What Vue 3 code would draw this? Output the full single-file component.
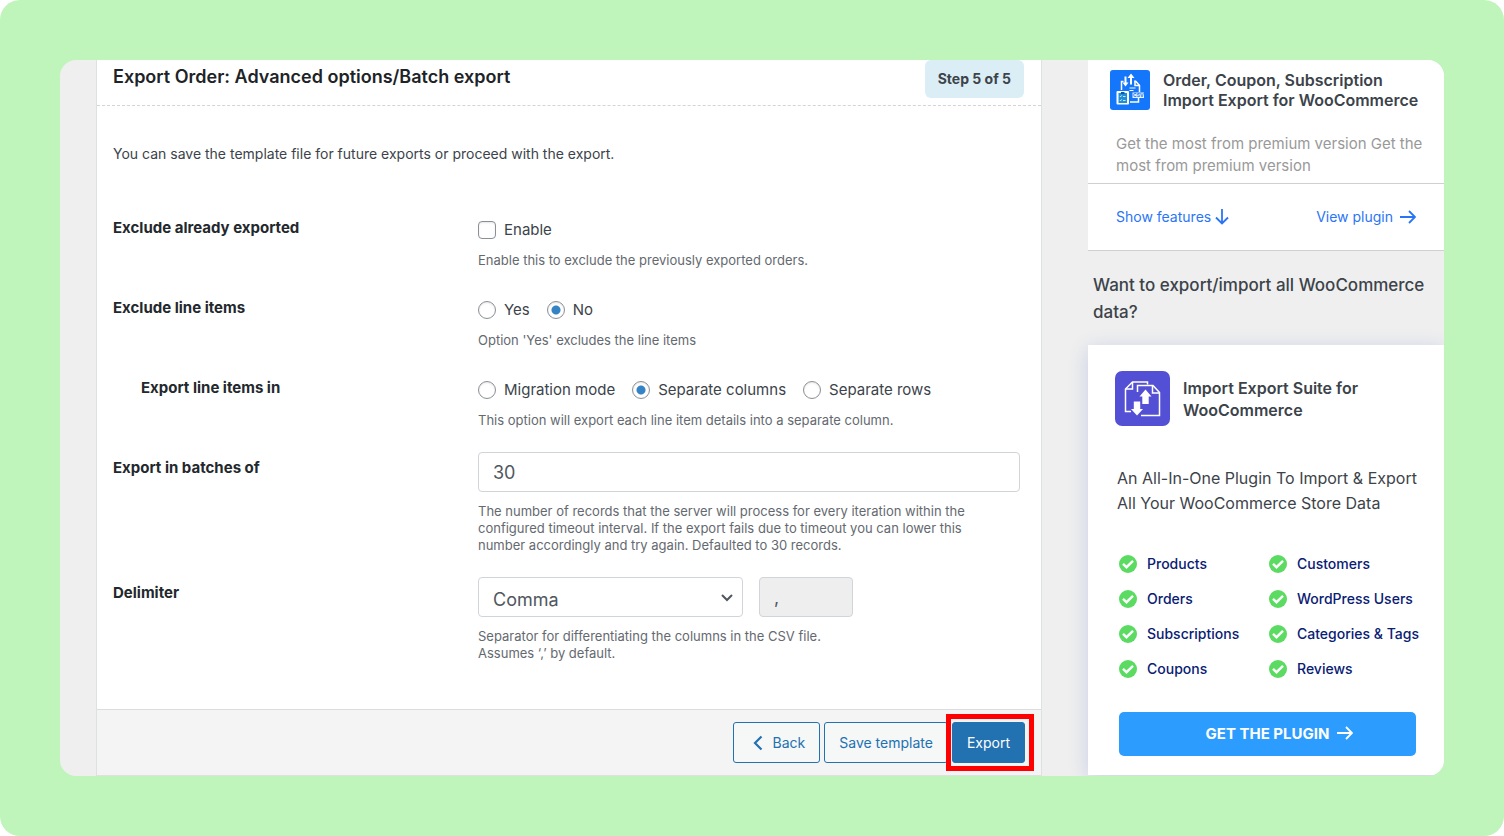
<script setup>
import { computed, ref } from 'vue'

const excludeExported = ref(false)
const excludeLineItems = ref('no')
const lineItemMode = ref('columns')
const batchSize = ref('30')
const delimiter = ref('comma')

const yesNo = [
  { value: 'yes', label: 'Yes' },
  { value: 'no', label: 'No' }
]

const lineItemModes = [
  { value: 'migration', label: 'Migration mode' },
  { value: 'columns', label: 'Separate columns' },
  { value: 'rows', label: 'Separate rows' }
]

const delimiters = [
  { value: 'comma', label: 'Comma', char: ',' },
  { value: 'semicolon', label: 'Semicolon', char: ';' },
  { value: 'tab', label: 'Tab', char: 'tab' }
]

const suiteItems = [
  'Products', 'Customers',
  'Orders', 'WordPress Users',
  'Subscriptions', 'Categories & Tags',
  'Coupons', 'Reviews'
]

const delimiterChar = computed(() => delimiters.find((item) => item.value === delimiter.value).char)
</script>

<template>
  <div class="page">
    <div class="shell">
      <main class="wizard">
        <header class="wizard__header">
          <h1>Export Order: Advanced options/Batch export</h1>
          <span class="wizard__step">Step 5 of 5</span>
        </header>

        <form class="wizard__body" @submit.prevent>
          <p class="wizard__intro">You can save the template file for future exports or proceed with the export.</p>

          <div class="field">
            <span class="field__label">Exclude already exported</span>
            <div>
              <div class="choices">
                <label class="choice">
                  <input v-model="excludeExported" type="checkbox">
                  <span>Enable</span>
                </label>
              </div>
              <p class="field__help">Enable this to exclude the previously exported orders.</p>
            </div>
          </div>

          <div class="field" role="radiogroup" aria-labelledby="exclude-items">
            <span id="exclude-items" class="field__label">Exclude line items</span>
            <div>
              <div class="choices">
                <label v-for="item in yesNo" :key="item.value" class="choice">
                  <input v-model="excludeLineItems" type="radio" name="exclude" :value="item.value">
                  <span>{{ item.label }}</span>
                </label>
              </div>
              <p class="field__help">Option 'Yes' excludes the line items</p>
            </div>
          </div>

          <div class="field" role="radiogroup" aria-labelledby="items-mode">
            <span id="items-mode" class="field__label field__label--nested">Export line items in</span>
            <div>
              <div class="choices">
                <label v-for="item in lineItemModes" :key="item.value" class="choice">
                  <input v-model="lineItemMode" type="radio" name="mode" :value="item.value">
                  <span>{{ item.label }}</span>
                </label>
              </div>
              <p class="field__help">This option will export each line item details into a separate column.</p>
            </div>
          </div>

          <div class="field">
            <label class="field__label" for="batch">Export in batches of</label>
            <div>
              <input id="batch" v-model="batchSize" class="box" type="text">
              <p class="field__help">The number of records that the server will process for every iteration within the configured timeout interval. If the export fails due to timeout you can lower this number accordingly and try again. Defaulted to 30 records.</p>
            </div>
          </div>

          <div class="field">
            <label class="field__label" for="delimiter">Delimiter</label>
            <div>
              <div class="delimiter">
                <div class="delimiter__select">
                  <select id="delimiter" v-model="delimiter" class="box">
                    <option v-for="item in delimiters" :key="item.value" :value="item.value">{{ item.label }}</option>
                  </select>
                  <svg viewBox="0 0 14 10" width="14" height="10" aria-hidden="true">
                    <path d="M2 2l5 5 5-5" fill="none" stroke="#50575e" stroke-width="2" />
                  </svg>
                </div>
                <input class="box delimiter__char" type="text" :value="delimiterChar" aria-label="Delimiter character" readonly>
              </div>
              <p class="field__help">Separator for differentiating the columns in the CSV file.<br>Assumes ‘,’ by default.</p>
            </div>
          </div>
        </form>

        <footer class="wizard__footer">
          <button class="btn" type="button">
            <svg class="btn__back" viewBox="0 0 10 16" width="10" height="16" aria-hidden="true">
              <path d="M8.500 1.500L2 8l6.500 6.500" fill="none" stroke="currentColor" stroke-width="2.200" />
            </svg>
            Back
          </button>
          <button class="btn" type="button">Save template</button>
          <div class="highlight">
            <button class="btn btn--primary" type="button">Export</button>
          </div>
        </footer>
      </main>

      <aside class="sidebar">
        <section class="plugin">
          <div class="plugin__head">
            <svg viewBox="0 0 40 40" width="40" height="40" aria-hidden="true">
              <rect width="40" height="40" rx="3" fill="#1477fb" />
              <g fill="none" stroke="#fff" stroke-width="1.500">
                <path d="M11.500 20v-8.500h2M24.500 11.500h1.500l3.500 4V22M20 32h8.500v-4" />
                <path d="M25 10.500v5h5" />
                <path d="M19.500 18h6M19.500 20.500h4" stroke-width="1.200" />
                <path d="M15.500 6.500v8M21 14.500v-8" stroke-width="2" />
              </g>
              <path d="M12.500 12.500h6l-3 4zM17.500 8h7L21 3.500z" fill="#fff" />
              <rect x="6.500" y="21" width="12.500" height="13.500" rx="1" fill="#fff" />
              <rect x="8.500" y="23" width="8.500" height="10" fill="#1d8fd8" />
              <rect x="11" y="22" width="3.500" height="2" fill="#0d5ba8" />
              <path d="M9.800 26l.8.800 1.200-1.500M9.800 30l.8.800 1.200-1.500M13 26.500h2.500M13 30.500h2.500" fill="none" stroke="#fff" stroke-width=".8" />
              <rect x="22.500" y="22.500" width="11.500" height="5.500" fill="#e6f3ff" />
              <text x="28.300" y="27" class="plugin__csv">CSV</text>
            </svg>
            <h2>Order, Coupon, Subscription Import Export for WooCommerce</h2>
          </div>
          <p class="plugin__text">Get the most from premium version Get the most from premium version</p>
          <div class="plugin__links">
            <a href="#">
              Show features
              <svg viewBox="0 0 14 16" width="14" height="16" aria-hidden="true">
                <path d="M7 0v14M1 8.500l6 6 6-6" fill="none" stroke="currentColor" stroke-width="1.800" />
              </svg>
            </a>
            <a href="#" class="plugin__view">
              View plugin
              <svg viewBox="0 0 16 14" width="16" height="14" aria-hidden="true">
                <path d="M0 7h15M9 1l6 6-6 6" fill="none" stroke="currentColor" stroke-width="1.800" />
              </svg>
            </a>
          </div>
        </section>

        <h2 class="sidebar__title">Want to export/import all WooCommerce data?</h2>

        <section class="suite">
          <div class="suite__head">
            <svg viewBox="0 0 55 55" width="55" height="55" aria-hidden="true">
              <rect width="55" height="55" rx="7" fill="#5450d6" />
              <g fill="none" stroke="#fff" stroke-width="1.500">
                <path d="M32.500 13.500V11H17.500L10.500 18v22.500h5.500" />
                <path d="M17.500 11v7h-7" />
                <path d="M22.500 21v-6.500h15.500l6.500 7V44.500H26" />
                <path d="M37.500 14.500v7.500h7" />
              </g>
              <path d="M30.500 18.500l6 7h-2.800v7.500h-6.400v-7.500h-2.800zM22 44.500l-6-6.500h2.800v-7.500h6.400V38H28z" fill="#fff" />
            </svg>
            <h2>Import Export Suite for WooCommerce</h2>
          </div>
          <p class="suite__text">An All-In-One Plugin To Import &amp; Export All Your WooCommerce Store Data</p>
          <ul class="suite__list">
            <li v-for="item in suiteItems" :key="item">
              <svg viewBox="0 0 18 18" width="18" height="18" aria-hidden="true">
                <circle cx="9" cy="9" r="9" fill="#5bdb62" />
                <path d="M4 8.800l3.500 3.400L14 5.800" fill="none" stroke="#fff" stroke-width="2.400" />
              </svg>
              {{ item }}
            </li>
          </ul>
          <a href="#" class="suite__cta">
            GET THE PLUGIN
            <svg viewBox="0 0 16 14" width="16" height="14" aria-hidden="true">
              <path d="M0 7h15M9 1l6 6-6 6" fill="none" stroke="currentColor" stroke-width="1.800" />
            </svg>
          </a>
        </section>
      </aside>
    </div>
  </div>
</template>

<style>
body {
  margin: 0;
  background: #fff;
}
</style>

<style scoped>
.page {
  box-sizing: border-box;
  min-height: 100vh;
  padding: 60px;
  border-radius: 20px;
  background: #bff4ba;
  color: #3c434a;
  font-family: Inter, "Liberation Sans", sans-serif;
  font-size: 14px;
}

.page *,
.page *::after {
  box-sizing: border-box;
}

h1,
h2,
p,
ul {
  margin: 0;
  padding: 0;
}

a {
  color: #2a75f6;
  text-decoration: none;
}

svg {
  flex-shrink: 0;
}

.shell {
  display: flex;
  gap: 46px;
  padding-left: 36px;
  border-radius: 16px;
  background: #efefef;
  overflow: hidden;
}

.wizard {
  display: flex;
  flex: 1;
  flex-direction: column;
  min-width: 0;
  border: 1px solid #dfe0e1;
  border-top: 0;
  background: #fff;
}

.wizard__header {
  display: flex;
  align-items: flex-start;
  justify-content: space-between;
  height: 46px;
  padding: 0 17px 0 16px;
  border-bottom: 1px dashed #d2d4d6;
}

.wizard__header h1 {
  padding-top: 4px;
  color: #1d2327;
  font-size: 18px;
  font-weight: 600;
  line-height: 26px;
}

.wizard__step {
  padding: 0 13px;
  border-radius: 6px;
  background: #dceef5;
  font-weight: 700;
  line-height: 38px;
}

.wizard__body {
  display: flex;
  flex: 1;
  flex-direction: column;
  gap: 23px;
  padding: 38px 21px 47px 16px;
}

.wizard__intro {
  margin-bottom: 25px;
  line-height: 20px;
}

.field {
  display: grid;
  grid-template-columns: 365px minmax(0, 1fr);
}

.field__label {
  padding-top: 6px;
  color: #23282d;
  font-size: 15px;
  font-weight: 700;
  line-height: 20px;
}

.field__label--nested {
  padding-left: 28px;
}

.field__help {
  margin-top: 11px;
  padding-right: 40px;
  color: #646970;
  font-size: 13px;
  line-height: 17px;
}

.choices {
  display: flex;
  gap: 17px;
  padding: 8px 0 1px;
}

.choice {
  display: flex;
  align-items: center;
  gap: 8px;
  font-size: 15px;
  line-height: 20px;
}

.choice input {
  width: 18px;
  height: 18px;
  margin: 0;
  border: 1px solid #8c8f94;
  border-radius: 4px;
  background: #fff;
  box-shadow: inset 0 1px 2px rgba(0, 0, 0, 0.1);
  appearance: none;
}

.choice input[type='radio'] {
  border-radius: 50%;
}

.choice input[type='radio']:checked {
  background: radial-gradient(circle, #3582c4 4px, #fff 5px);
}

.choice input[type='checkbox']:checked {
  background: #3582c4;
}

.box {
  display: block;
  width: 100%;
  height: 40px;
  padding: 0 14px;
  border: 1px solid #d0d5da;
  border-radius: 4px;
  background: #fff;
  color: #50575e;
  font: inherit;
  font-size: 18px;
  appearance: none;
}

.delimiter {
  display: flex;
  gap: 16px;
}

.delimiter__select {
  position: relative;
  width: 265px;
}

.delimiter__select svg {
  position: absolute;
  top: 16px;
  right: 9px;
  pointer-events: none;
}

.delimiter__select select {
  padding-top: 4px;
}

.delimiter__char {
  width: 94px;
  background: #eee;
}

.wizard__footer {
  display: flex;
  justify-content: flex-end;
  gap: 4px;
  padding: 12px 16px;
  border-top: 1px solid #dcdcde;
  background: #f4f4f4;
}

.btn {
  display: flex;
  align-items: center;
  height: 41px;
  padding: 0 14px;
  border: 1px solid #2271b1;
  border-radius: 3px;
  background: #f6f7f7;
  color: #2271b1;
  font: inherit;
}

.btn__back {
  margin: 0 10px 0 5px;
}

.btn--primary {
  background: #2271b1;
  color: #fff;
}

.highlight {
  position: relative;
}

.highlight::after {
  content: '';
  position: absolute;
  inset: -8px -9px -8px -6px;
  border: 5px solid #fe0000;
  pointer-events: none;
}

.sidebar {
  flex: 0 0 356px;
}

.plugin {
  border-bottom: 1px solid #d0d0d0;
  background: #fff;
}

.plugin__head {
  display: flex;
  gap: 13px;
  padding: 10px 16px 0 22px;
}

.plugin__head h2 {
  font-size: 16px;
  font-weight: 600;
  line-height: 20px;
}

.plugin__csv {
  fill: #1477fb;
  font-size: 5px;
  font-weight: 700;
  text-anchor: middle;
}

.plugin__text {
  padding: 23px 16px 6px 28px;
  color: #999;
  font-size: 15px;
  line-height: 22px;
}

.plugin__links {
  display: flex;
  justify-content: space-between;
  padding: 23px 28px;
  border-top: 1px solid #d0d0d0;
  line-height: 20px;
}

.plugin__links a {
  display: flex;
  align-items: center;
  gap: 4px;
}

.plugin__links .plugin__view {
  gap: 7px;
}

.sidebar__title {
  padding: 21px 16px 19px 5px;
  font-size: 17px;
  font-weight: 500;
  line-height: 27px;
}

.suite {
  padding: 26px 16px 19px 27px;
  background: #fff;
  box-shadow: 0 4px 19px rgba(46, 80, 194, 0.2);
}

.suite__head {
  display: flex;
  align-items: center;
  gap: 13px;
}

.suite__head h2 {
  font-size: 16px;
  font-weight: 600;
  line-height: 22px;
}

.suite__text {
  padding: 40px 0 0 2px;
  font-size: 16px;
  line-height: 25px;
}

.suite__list {
  display: grid;
  grid-template-columns: 150px minmax(0, 1fr);
  row-gap: 15px;
  padding: 38px 0 0 4px;
  color: #092073;
  font-weight: 500;
  line-height: 20px;
  list-style: none;
}

.suite__list li {
  display: flex;
  align-items: center;
  gap: 10px;
  white-space: nowrap;
}

.suite__cta {
  display: flex;
  align-items: center;
  justify-content: center;
  gap: 8px;
  height: 44px;
  margin: 33px 12px 0 4px;
  padding: 0 0 2px 24px;
  border-radius: 5px;
  background: #2d9cff;
  color: #fff;
  font-size: 15px;
  font-weight: 700;
}
</style>
